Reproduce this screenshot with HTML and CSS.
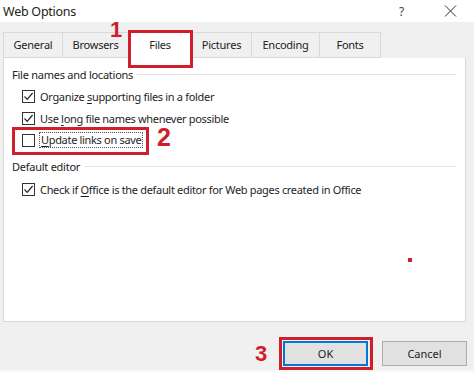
FILE: index.html
```html
<!DOCTYPE html>
<html lang="en">

<head>
    <meta charset="UTF-8">
    <title>Web Options</title>
    <link rel="stylesheet" href="styles.css">
</head>

<body>
    <div class="dialog">
        <div class="titlebar">
            <span class="title">Web Options</span>
            <span class="help">?</span>
            <svg class="close" width="13" height="12" viewBox="0 0 13 12">
                <path d="M1 0.5 L12 11.5 M12 0.5 L1 11.5" stroke="#333" stroke-width="1" fill="none"/>
            </svg>
        </div>

        <div class="tabs">
            <div class="tab tab-general">General</div>
            <div class="tab tab-browsers">Browsers</div>
            <div class="tab tab-files active">Files</div>
            <div class="tab tab-pictures">Pictures</div>
            <div class="tab tab-encoding">Encoding</div>
            <div class="tab tab-fonts">Fonts</div>
        </div>

        <div class="panel">
            <div class="group-title first">File names and locations</div>
            <div class="row">
                <span class="check checked"><svg width="11" height="11" viewBox="0 0 11 11"><path d="M1.5 5.5 L4.2 8.3 L9.6 2" stroke="#222" stroke-width="1.2" fill="none"/></svg></span>
                <span class="label">Organize <u>s</u>upporting files in a folder</span>
            </div>
            <div class="row">
                <span class="check checked"><svg width="11" height="11" viewBox="0 0 11 11"><path d="M1.5 5.5 L4.2 8.3 L9.6 2" stroke="#222" stroke-width="1.2" fill="none"/></svg></span>
                <span class="label">Use <u>l</u>ong file names whenever possible</span>
            </div>
            <div class="row">
                <span class="check"></span>
                <span class="label focus"><u>U</u>pdate links on save</span>
            </div>

            <div class="group-title second">Default editor</div>
            <div class="row row-editor">
                <span class="check checked"><svg width="11" height="11" viewBox="0 0 11 11"><path d="M1.5 5.5 L4.2 8.3 L9.6 2" stroke="#222" stroke-width="1.2" fill="none"/></svg></span>
                <span class="label">Check if <u>O</u>ffice is the default editor for Web pages created in Office</span>
            </div>
        </div>

        <div class="footer">
            <button class="btn btn-default">OK</button>
            <button class="btn">Cancel</button>
        </div>

        <!-- annotations drawn on top of the dialog -->
        <div class="mark box-files"></div>
        <div class="mark box-update"></div>
        <div class="mark box-ok"></div>
        <span class="num num-1">1</span>
        <span class="num num-2">2</span>
        <span class="num num-3">3</span>
        <span class="dot"></span>
    </div>
</body>

</html>
```

FILE: styles.css
```css
* {
    box-sizing: border-box;
}

body {
    margin: 0;
    background: #f0f0f0;
    font-family: "Noto Sans", "Open Sans", sans-serif;
    font-size: 11px;
    letter-spacing: -0.25px;
    color: #1e1e1e;
}

.dialog {
    position: relative;
    width: 474px;
    height: 372px;
    overflow: hidden;
    background: #f0f0f0;
    border-bottom: 2px solid #f8f8f8;
}

.titlebar {
    height: 22px;
    background: #fff;
    display: flex;
    align-items: center;
    padding-left: 3px;
}
.title {
    font-size: 12.5px;
    color: #222;
    flex: 1;
}
.help {
    font-size: 12px;
    color: #444;
    margin-right: 40px;
}
.close {
    margin-right: 17px;
}

.tabs {
    display: flex;
    margin-top: 10px;
    padding-left: 3px;
    height: 26px;
}
.tab {
    height: 26px;
    line-height: 24px;
    text-align: center;
    border: 1px solid #d9d9d9;
    border-left: none;
    background: #f0f0f0;
    color: #222;
}
.tab-general {
    width: 60px;
    border-left: 1px solid #d9d9d9;
}
.tab-browsers { width: 66px; }
.tab-files { width: 63px; }
.tab-pictures { width: 60px; }
.tab-encoding { width: 68px; }
.tab-fonts { width: 61px; }
.tab.active {
    background: #fff;
    border-bottom-color: #fff;
}

.panel {
    margin: 0 8px 0 3px;
    height: 264px;
    background: #fff;
    border: 1px solid #d9d9d9;
    border-top: none;
    padding: 8px 9px 0 8px;
}

.group-title {
    display: flex;
    align-items: center;
    height: 16px;
    color: #222;
}
.group-title::after {
    content: "";
    flex: 1;
    border-top: 1px solid #e3e3e3;
    margin-left: 4px;
}
.group-title.second {
    margin-top: 7px;
}

.row {
    display: flex;
    align-items: center;
    height: 22px;
    padding-left: 10px;
    gap: 5px;
}
.row:nth-child(2) {
    margin-top: 3px;
}
.row-editor {
    margin-top: 4px;
}

.check {
    width: 13px;
    height: 13px;
    border: 1px solid #333;
    background: #fff;
    display: flex;
    align-items: center;
    justify-content: center;
    flex: none;
}
.label {
    white-space: nowrap;
    letter-spacing: -0.32px;
}
.label u {
    text-decoration-thickness: 1px;
    text-underline-offset: 2px;
}
.focus {
    border: 1px dotted #555;
    padding: 0 1px;
    margin-left: -1px;
    line-height: 14px;
}

.footer {
    display: flex;
    justify-content: flex-end;
    gap: 14px;
    padding: 19px 7px 0 0;
}
.btn {
    width: 85px;
    height: 25px;
    background: #e1e1e1;
    border: 1px solid #adadad;
    font-family: inherit;
    font-size: 11px;
    color: #222;
    padding: 0;
}
.btn-default {
    border: 1px solid #0078d7;
    box-shadow: inset 0 0 0 1px #0078d7;
}

.mark {
    position: absolute;
    border: 3px solid #cf1f2d;
}
.box-files {
    left: 128px;
    top: 30px;
    width: 65px;
    height: 38px;
}
.box-update {
    left: 12px;
    top: 127px;
    width: 137px;
    height: 28px;
}
.box-ok {
    left: 279px;
    top: 337px;
    width: 94px;
    height: 33px;
}

.num {
    position: absolute;
    font-family: "Liberation Sans", Arial, sans-serif;
    font-weight: bold;
    color: #cf1f2d;
    letter-spacing: 0;
}
.num-1 {
    left: 110px;
    top: 22px;
    font-size: 22px;
    line-height: 16px;
}
.num-2 {
    left: 157px;
    top: 125px;
    font-size: 25px;
    line-height: 1;
}
.num-3 {
    left: 255px;
    top: 343px;
    font-size: 22px;
    line-height: 1;
}

.dot {
    position: absolute;
    left: 408px;
    top: 258px;
    width: 4px;
    height: 4px;
    background: #cf1f2d;
}
```
